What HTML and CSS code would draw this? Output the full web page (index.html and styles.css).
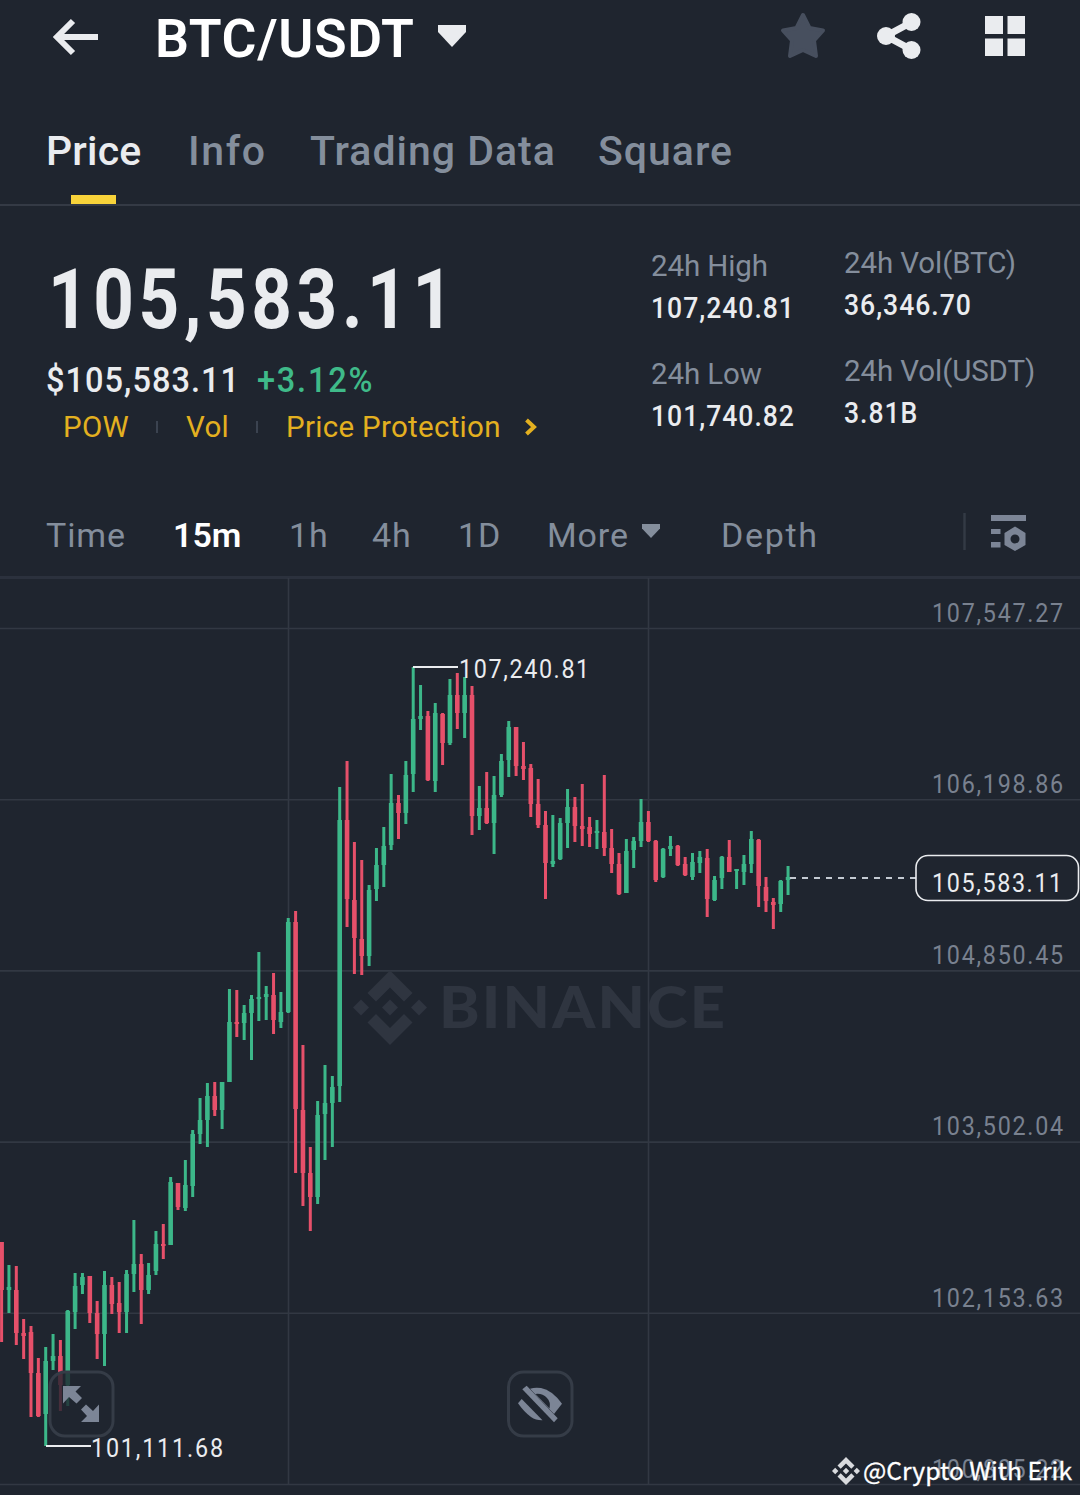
FILE: index.html
```html
<!DOCTYPE html>
<html lang="en">
<head>
    <meta charset="UTF-8">
    <meta name="viewport" content="width=device-width, initial-scale=1.0">
    <title>BTC/USDT</title>
    <link rel="stylesheet" href="styles.css">
</head>
<body>
    <!-- top bar -->
    <header class="header">
        <svg class="back" width="46" height="38" viewBox="0 0 46 38">
            <path d="M20 3 L4 19 L20 35 M4 19 H45" fill="none" stroke="#eaecef" stroke-width="6"/>
        </svg>
        <h1 class="pair">BTC/USDT</h1>
        <svg class="pair-caret" width="28" height="22" viewBox="0 0 28 22">
            <path d="M0 0 H28 V7 L14 22 L0 7 Z" fill="#eaecef"/>
        </svg>
        <div class="actions">
            <svg width="46" height="48" viewBox="0 0 46 48">
                <path d="M23 3 L29.500 16 L43 18.500 L34 28.500 L36 44 L23 38 L10 44 L12 28.500 L3 18.500 L16.500 16 Z" fill="#474f5e" stroke="#474f5e" stroke-width="4" stroke-linejoin="round"/>
            </svg>
            <svg width="44" height="46" viewBox="0 0 44 46">
                <path d="M35 9 L9 23 L35 37" fill="none" stroke="#eaecef" stroke-width="7"/>
                <circle cx="34.500" cy="9" r="9" fill="#eaecef"/>
                <circle cx="9" cy="23" r="9" fill="#eaecef"/>
                <circle cx="34.500" cy="37" r="9" fill="#eaecef"/>
            </svg>
            <svg width="40" height="40" viewBox="0 0 40 40">
                <path d="M0 0 H18 V18 H0 Z M22.500 0 H40 V18 H22.500 Z M0 22.500 H18 V40 H0 Z M22.500 22.500 H40 V40 H22.500 Z" fill="#eaecef"/>
            </svg>
        </div>
    </header>

    <nav class="tabs">
        <a class="tab active">Price</a>
        <a class="tab tab-info">Info</a>
        <a class="tab">Trading Data</a>
        <a class="tab">Square</a>
    </nav>

    <!-- price summary -->
    <section class="summary">
        <div class="quote">
            <div class="price">105,583.11</div>
            <div class="sub">
                <span class="fiat">$105,583.11</span>
                <span class="change">+3.12%</span>
            </div>
            <div class="tags">
                <span class="tag-pow">POW</span>
                <span class="tag-sep"></span>
                <span class="tag-vol">Vol</span>
                <span class="tag-sep"></span>
                <span class="tag-protect">Price Protection</span>
                <svg width="14" height="18" viewBox="0 0 14 18">
                    <path d="M2.500 2 L10 9 L2.500 16" fill="none" stroke="#e3b020" stroke-width="4"/>
                </svg>
            </div>
        </div>
        <dl class="stats">
            <dt>24h High</dt>
            <dd>107,240.81</dd>
            <dt>24h Low</dt>
            <dd>101,740.82</dd>
        </dl>
        <dl class="stats stats-vol">
            <dt>24h Vol(BTC)</dt>
            <dd>36,346.70</dd>
            <dt>24h Vol(USDT)</dt>
            <dd>3.81B</dd>
        </dl>
    </section>

    <nav class="intervals">
        <span>Time</span>
        <span class="active">15m</span>
        <span>1h</span>
        <span>4h</span>
        <span>1D</span>
        <span class="more">More
            <svg width="18" height="14" viewBox="0 0 18 14"><path d="M0 0 H18 V4.500 L9 14 L0 4.500 Z" fill="#848e9c"/></svg>
        </span>
        <span class="depth">Depth</span>
        <svg class="settings" width="63" height="38" viewBox="0 0 63 38">
            <path d="M1.500 0 V37" stroke="#333a45" stroke-width="2.500"/>
            <path d="M28 2 H63 V8 H28 Z M28 16 H37.500 V21 H28 Z M28 29 H37.500 V34.500 H28 Z" fill="#7c8596"/>
            <path fill-rule="evenodd" d="M52 13.500 L62.500 20 V32 L52 38 L41.500 32 V20 Z M52 21.500 A4.500 4.500 0 1 0 52 30.500 A4.500 4.500 0 1 0 52 21.500 Z" fill="#7c8596"/>
        </svg>
    </nav>

    <svg class="chart" id="chart" width="1080" height="919" viewBox="0 576 1080 919">
        <g class="grid">
            <path class="top-line" d="M0 577.500 H1080"/>
            <path d="M0 628.500 H1080 M0 799.700 H1080 M0 970.900 H1080 M0 1142.100 H1080 M0 1313.300 H1080 M0 1484.500 H1080"/>
            <path d="M288.500 578 V1484 M648.500 578 V1484"/>
        </g>

        <!-- brand behind the candles -->
        <g class="brand">
            <path d="M390 970.500 L412.500 993 L404 1001.500 L390 987.500 L376 1001.500 L367.500 993 Z"/>
            <path d="M390 1045 L412.500 1022.500 L404 1014 L390 1028 L376 1014 L367.500 1022.500 Z"/>
            <path d="M390 999.500 L398 1007.500 L390 1015.500 L382 1007.500 Z"/>
            <path d="M361 999.500 L369 1007.500 L361 1015.500 L353 1007.500 Z"/>
            <path d="M419 999.500 L427 1007.500 L419 1015.500 L411 1007.500 Z"/>
            <text x="439" y="1028" textLength="288" lengthAdjust="spacingAndGlyphs">BINANCE</text>
        </g>

        <g id="candles"></g>

        <g class="axis" transform="translate(932 0) scale(0.88 1)">
            <text y="622.500" textLength="149">107,547.27</text>
            <text y="793.500" textLength="149">106,198.86</text>
            <text y="964.500" textLength="149">104,850.45</text>
            <text y="1135.500" textLength="149">103,502.04</text>
            <text y="1307.500" textLength="149">102,153.63</text>
            <text y="1478.500" textLength="149">100,805.22</text>
        </g>

        <!-- high / low markers -->
        <g class="marker">
            <path d="M413 667 H458"/>
            <text transform="translate(459 677.500) scale(0.88 1)" textLength="148">107,240.81</text>
            <path d="M46 1446 H91"/>
            <text transform="translate(91 1456.500) scale(0.88 1)" textLength="150">101,111.68</text>
        </g>

        <!-- last price -->
        <g class="last">
            <path class="dash" d="M790 878 H916"/>
            <rect x="916" y="855.500" width="162.500" height="45" rx="12"/>
            <text transform="translate(932 891.500) scale(0.88 1)" textLength="148">105,583.11</text>
        </g>

        <g class="chart-button">
            <rect x="50" y="1372" width="63" height="64" rx="15"/>
            <path d="M63 1386 H81 L75.500 1391.500 L82 1398 L76.500 1403.500 L69 1397 L63 1403.500 Z"/>
            <path d="M99 1422 H81 L87 1416 L81 1409.500 L86 1404.500 L93 1411 L99 1404.500 Z"/>
        </g>
        <g class="chart-button">
            <rect x="508.500" y="1372" width="63.500" height="64" rx="15"/>
            <path d="M522.300 1389.300 L526.700 1385.700 L557.700 1418.300 L554 1422.300 Z"/>
            <path d="M530 1388.800 Q535 1387 541 1388 Q552 1390 562 1403.700 L554 1414 Z"/>
            <path class="hole" d="M535.500 1394 Q542 1393 547 1398 Q551 1402 549.500 1408.500 Z"/>
            <path d="M521.700 1399 L518 1403.300 Q524 1412 531 1417 Q536 1420.500 542.500 1420.300 Z"/>
        </g>

        <!-- author credit -->
        <g class="credit">
            <path d="M846 1457 L854.500 1465.500 L851.300 1468.700 L846 1463.400 L840.700 1468.700 L837.500 1465.500 Z"/>
            <path d="M846 1485 L854.500 1476.500 L851.300 1473.300 L846 1478.600 L840.700 1473.300 L837.500 1476.500 Z"/>
            <path d="M846 1467.800 L849.200 1471 L846 1474.200 L842.800 1471 Z M835.200 1467.800 L838.400 1471 L835.200 1474.200 L832 1471 Z M856.800 1467.800 L860 1471 L856.800 1474.200 L853.600 1471 Z"/>
            <text x="863" y="1480" textLength="209" lengthAdjust="spacingAndGlyphs">@Crypto With Erik</text>
        </g>
    </svg>

    <script src="chart.js"></script>
</body>
</html>
```

FILE: styles.css
```css
body {
    margin: 0;
    width: 1080px;
    background-color: #1f252f;
    color: #eaecef;
    font-family: Roboto, "Liberation Sans", sans-serif;
    overflow: hidden;
}

svg {
    display: block;
    flex-shrink: 0;
}

/* header */
.header {
    display: flex;
    align-items: center;
    height: 77px;
    padding: 0 55px 0 53px;
}

.back {
    margin-top: -4px;
}

.pair {
    margin: 0 0 0 56px;
    width: 283px;
    font-size: 53.5px;
    font-weight: 600;
    line-height: 77px;
    letter-spacing: 0.6px;
    color: #fff;
}

.pair-caret {
    margin-top: -5px;
}

.actions {
    display: flex;
    align-items: center;
    margin: -5px 0 0 auto;
}

.actions svg + svg {
    margin-left: 51px;
}

.actions svg + svg + svg {
    margin-left: 64px;
}

/* page tabs */
.tabs {
    display: grid;
    grid-template-columns: 141px 123px 288px auto;
    height: 127px;
    padding-left: 46px;
    border-bottom: 2px solid #343a45;
}

.tab {
    position: relative;
    padding-top: 50px;
    font-size: 41px;
    font-weight: 500;
    line-height: 48px;
    letter-spacing: 1px;
    color: #848e9c;
}

.tab-info {
    padding-left: 1px;
    letter-spacing: 1.6px;
}

.tab.active {
    letter-spacing: 0.2px;
    color: #eaecef;
}

.tab.active::after {
    content: "";
    position: absolute;
    left: 25px;
    bottom: 0;
    width: 45px;
    height: 9px;
    background-color: #f8d33a;
}

/* summary */
.summary {
    display: flex;
    height: 288px;
}

.quote {
    width: 605px;
    padding: 51px 0 0 46px;
}

.price {
    margin-left: 2px;
    font-size: 83.5px;
    font-weight: 700;
    line-height: 86px;
    letter-spacing: 5.4px;
    transform: scaleX(0.85);
    transform-origin: left;
}

.sub {
    display: flex;
    margin-top: 19px;
    font-size: 35px;
    font-weight: 500;
    line-height: 38px;
    letter-spacing: 1.1px;
}

.fiat {
    width: 211px;
}

.fiat,
.change {
    transform: scaleX(0.93);
    transform-origin: left;
}

.change {
    letter-spacing: 1.9px;
    color: #3fba89;
}

.tags {
    display: flex;
    align-items: center;
    margin-top: 11px;
    padding-left: 17px;
    font-size: 29.5px;
    line-height: 32px;
    letter-spacing: 0.3px;
    color: #e3b020;
}

.tag-pow {
    width: 93px;
}

.tag-vol {
    width: 70px;
    padding-left: 28px;
}

.tag-protect {
    width: 238px;
    padding-left: 28px;
}

.tag-sep {
    width: 2px;
    height: 12px;
    background-color: #3b4350;
}

.stats {
    width: 193px;
    margin: 0;
    padding-top: 43px;
    font-size: 29.5px;
    line-height: 34px;
}

.stats-vol {
    padding-top: 40px;
}

.stats dt {
    letter-spacing: -0.1px;
    color: #848e9c;
    white-space: nowrap;
}

.stats dd {
    margin: 8px 0 32px;
    font-weight: 500;
    letter-spacing: 1.1px;
    transform: scaleX(0.9);
    transform-origin: left;
}

/* intervals */
.intervals {
    display: grid;
    grid-template-columns: 128px 115px 83px 86px 89px 174px 242px auto;
    align-items: center;
    height: 82px;
    padding-left: 46px;
    font-size: 34px;
    line-height: 40px;
    letter-spacing: 0.9px;
    color: #848e9c;
}

.intervals .active {
    margin-left: -1px;
    font-weight: 600;
    letter-spacing: 0;
    color: #fff;
}

.intervals .depth {
    letter-spacing: 1.7px;
}

.more {
    display: flex;
    align-items: center;
    gap: 13px;
}

.more svg {
    margin-top: -8px;
}

.settings {
    margin-top: -7px;
}

/* chart */
.chart text {
    font-family: Roboto, "Liberation Sans", sans-serif;
    font-size: 26.5px;
}

.grid path {
    fill: none;
    stroke: #323843;
    stroke-width: 1.6;
}

.grid .top-line {
    stroke: #2b313d;
    stroke-width: 3;
}

.brand {
    fill: #2f3540;
}

.chart .brand text {
    font-family: Lato, "Open Sans", sans-serif;
    font-size: 58px;
    font-weight: 900;
    letter-spacing: 2px;
}

.up {
    fill: #3cb789;
}

.down {
    fill: #e6506a;
}

.axis text {
    fill: #79818f;
}

.marker path {
    stroke: #eaecef;
    stroke-width: 2;
}

.marker text,
.last text {
    fill: #eaecef;
}

.last rect {
    fill: #1f252f;
    stroke: #eaecef;
    stroke-width: 1.6;
}

.last .dash {
    stroke: #c4cad2;
    stroke-width: 1.8;
    stroke-dasharray: 6 6;
}

.chart-button rect {
    fill: #1f252f;
    fill-opacity: 0.8;
    stroke: #353c47;
    stroke-width: 3;
}

.chart-button path {
    fill: #7c8596;
}

.chart-button .hole {
    fill: #1f252f;
}

.credit path {
    fill: #d8dadd;
}

.chart .credit text {
    font-family: "Noto Sans CJK SC", "Noto Sans", sans-serif;
    font-size: 24px;
    font-weight: 400;
    fill: #fff;
    stroke: #fff;
    stroke-width: 0.3;
}
```

FILE: chart.js
```js
// each candle: direction, high, body top, body bottom, low (svg units)
const candles = [
    ['d', 1242, 1242, 1290, 1342], ['u', 1265, 1287, 1290, 1313], ['d', 1266, 1290, 1333, 1345], ['d', 1319, 1333, 1336, 1359],
    ['d', 1326, 1332, 1373, 1417], ['d', 1358, 1373, 1416, 1417], ['u', 1347, 1361, 1414, 1446], ['u', 1334, 1356, 1361, 1370],
    ['d', 1340, 1356, 1385, 1411], ['u', 1310, 1311, 1385, 1406], ['u', 1273, 1286, 1312, 1329], ['u', 1273, 1277, 1285, 1294],
    ['d', 1276, 1276, 1313, 1323], ['d', 1301, 1313, 1334, 1359], ['u', 1271, 1285, 1334, 1366], ['d', 1277, 1285, 1304, 1314],
    ['d', 1282, 1303, 1312, 1333], ['u', 1270, 1274, 1312, 1333], ['u', 1220, 1264, 1274, 1292], ['d', 1254, 1264, 1290, 1324],
    ['u', 1263, 1275, 1290, 1294], ['u', 1231, 1244, 1271, 1275], ['d', 1224, 1244, 1246, 1259], ['u', 1177, 1182, 1245, 1245],
    ['d', 1183, 1183, 1207, 1210], ['u', 1160, 1185, 1208, 1211], ['u', 1130, 1134, 1186, 1197], ['u', 1098, 1120, 1134, 1144],
    ['u', 1083, 1096, 1120, 1147], ['d', 1082, 1096, 1110, 1116], ['u', 1082, 1082, 1110, 1129], ['u', 989, 1022, 1082, 1082],
    ['d', 990, 1022, 1024, 1037], ['u', 1005, 1013, 1023, 1040], ['u', 995, 999, 1013, 1060], ['u', 952, 997, 999, 1021],
    ['u', 986, 994, 997, 1020], ['d', 973, 995, 1020, 1034], ['u', 992, 1012, 1022, 1028], ['u', 918, 922, 1012, 1013],
    ['d', 911, 922, 1109, 1173], ['d', 1045, 1110, 1173, 1206], ['d', 1147, 1173, 1197, 1231], ['u', 1101, 1115, 1197, 1204],
    ['u', 1065, 1103, 1114, 1160], ['u', 1076, 1087, 1103, 1147], ['u', 787, 820, 1086, 1102], ['d', 761, 820, 899, 927],
    ['d', 842, 900, 938, 974], ['d', 860, 939, 956, 975], ['u', 885, 890, 956, 966], ['u', 848, 865, 889, 901],
    ['u', 827, 846, 865, 887], ['u', 774, 803, 845, 850], ['d', 795, 803, 813, 839], ['u', 761, 775, 813, 824],
    ['u', 667, 719, 774, 792], ['u', 685, 716, 719, 730], ['d', 711, 716, 780, 781], ['u', 703, 713, 781, 792],
    ['d', 713, 714, 743, 765], ['u', 679, 695, 743, 745], ['d', 673, 695, 713, 729], ['u', 677, 695, 713, 738],
    ['d', 686, 695, 816, 835], ['u', 786, 808, 816, 830], ['d', 772, 808, 823, 824], ['u', 776, 795, 823, 854],
    ['u', 754, 761, 795, 797], ['u', 721, 727, 760, 777], ['d', 727, 727, 766, 776], ['d', 742, 766, 769, 780],
    ['d', 764, 768, 804, 817], ['d', 779, 804, 825, 828], ['d', 811, 825, 863, 899], ['u', 815, 861, 864, 867],
    ['u', 818, 823, 859, 860], ['u', 789, 807, 823, 848], ['d', 797, 807, 826, 842], ['d', 784, 826, 829, 846],
    ['d', 817, 827, 834, 847], ['u', 820, 831, 833, 849], ['d', 775, 832, 848, 856], ['d', 829, 848, 864, 873],
    ['d', 853, 864, 894, 895], ['u', 839, 851, 893, 893], ['u', 837, 841, 850, 868], ['u', 799, 822, 841, 847],
    ['d', 811, 822, 841, 842], ['d', 840, 841, 880, 882], ['u', 848, 849, 877, 878], ['u', 836, 846, 849, 856],
    ['d', 845, 846, 865, 866], ['d', 857, 864, 875, 876], ['u', 853, 862, 877, 880], ['u', 851, 857, 863, 873],
    ['d', 849, 858, 899, 917], ['u', 876, 880, 900, 901], ['u', 856, 857, 878, 889], ['d', 840, 857, 872, 872],
    ['u', 869, 869, 871, 889], ['u', 855, 864, 872, 885], ['u', 831, 839, 864, 873], ['d', 839, 840, 886, 907],
    ['d', 877, 887, 901, 912], ['d', 898, 902, 905, 929], ['u', 880, 881, 904, 912], ['u', 866, 877, 880, 895]
];

const group = document.getElementById('candles');

function addBar(x, top, bottom, width, cls) {
    const rect = document.createElementNS('http://www.w3.org/2000/svg', 'rect');
    rect.setAttribute('x', x - width / 2);
    rect.setAttribute('y', top);
    rect.setAttribute('width', width);
    rect.setAttribute('height', bottom - top);
    rect.setAttribute('class', cls);
    group.appendChild(rect);
}

candles.forEach(([dir, high, top, bottom, low], i) => {
    const x = 1.6 + i * 7.35;
    const cls = dir === 'u' ? 'up' : 'down';
    addBar(x, high, low, 3, cls);
    addBar(x, top, bottom, 4.6, cls);
});
```
